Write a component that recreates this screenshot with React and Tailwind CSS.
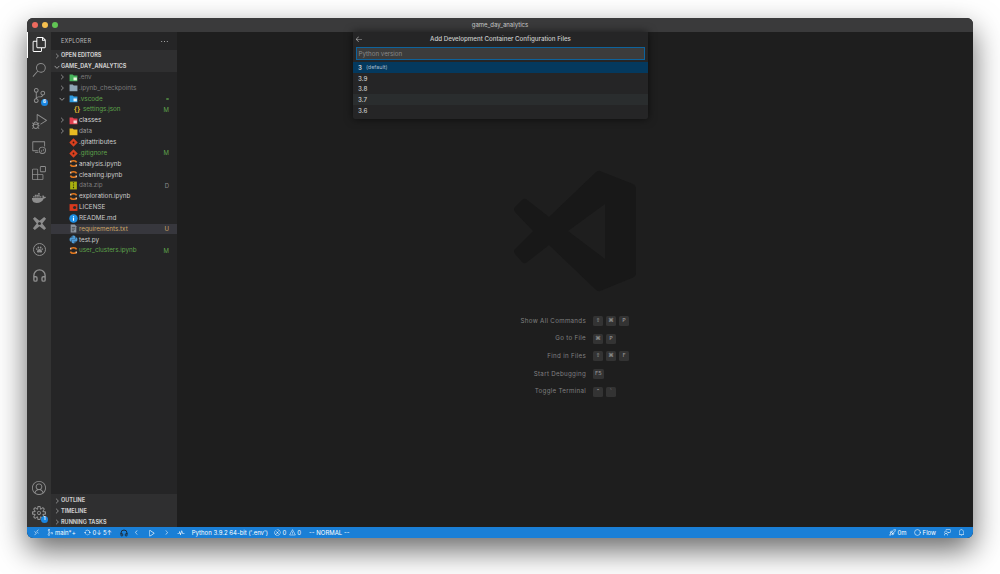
import React from "react";
import { VscFiles, VscSearch, VscSourceControl, VscDebugAlt, VscRemoteExplorer, VscExtensions, VscAccount, VscSettingsGear, VscBell, VscFeedback, VscRemote, VscSync, VscError, VscWarning, VscChevronRight, VscChevronDown, VscChevronLeft, VscArrowLeft, VscEllipsis, VscPlay, VscGitMerge, VscPulse } from "react-icons/vsc";
import { FaDocker, FaPaw, FaPython } from "react-icons/fa";
import { Headphones, Rocket, Circle } from "lucide-react";

const Folder = ({ c, badge }) => (
  <svg width="9" height="9" viewBox="0 0 16 16" className="shrink-0">
    <path d="M1 2.5h5.5l2 2H15v10H1z" fill={c} />
    {badge && <rect x="8" y="8" width="6" height="5" fill={badge} />}
  </svg>
);
const Git = () => (
  <svg width="9" height="9" viewBox="0 0 16 16" className="shrink-0"><path d="M8 0.5l7.5 7.5-7.5 7.5L0.5 8z" fill="#d8401f" /><circle cx="8" cy="8" r="1.6" fill="#3a1a10" /></svg>
);
const Jup = () => (
  <svg width="9" height="9" viewBox="0 0 16 16" className="shrink-0" fill="none" stroke="#e87a1d" strokeWidth="2.8">
    <path d="M2.5 6C4 2 12 2 13.5 6" /><path d="M2.5 10C4 14 12 14 13.5 10" /><path d="M3 3v3M13 10v3" stroke="#ddd" strokeWidth="1.6" />
  </svg>
);
const Braces = () => <span className="w-[9px] shrink-0 text-center text-[7px] font-bold text-[#e0b32d] leading-none">{"{}"}</span>;
const Zip = () => (
  <svg width="9" height="9" viewBox="0 0 16 16" className="shrink-0"><rect x="2" y="1" width="12" height="14" fill="#a8b10f" /><path d="M7 2h2v2H7zM7 6h2v2H7zM7 10h2v3H7z" fill="#2b2b10" /></svg>
);
const Lic = () => (
  <svg width="9" height="9" viewBox="0 0 16 16" className="shrink-0"><rect x="1" y="2" width="14" height="12" fill="#d9391e" /><circle cx="10" cy="8" r="2.8" fill="#2a2a2a" /></svg>
);
const Info = () => (
  <svg width="9" height="9" viewBox="0 0 16 16" className="shrink-0"><circle cx="8" cy="8" r="7.5" fill="#1e90e6" /><rect x="7" y="7" width="2" height="5" fill="#fff" /><rect x="7" y="4" width="2" height="2" fill="#fff" /></svg>
);
const Txt = () => (
  <svg width="9" height="9" viewBox="0 0 16 16" className="shrink-0"><path d="M3 1h7l3 3v11H3z" fill="#8d96a0" /><path d="M5 6h6M5 9h6M5 12h4" stroke="#333" strokeWidth="1.2" /></svg>
);
const Py = () => <FaPython size={9} color="#4d9bd6" className="shrink-0" />;

const G = "text-[#5fa44c]";
const files = [
  { n: ".env", i: <Folder c="#47b35c" badge="#e8f5e0" />, ch: "r", t: "text-[#7d7d7d]" },
  { n: ".ipynb_checkpoints", i: <Folder c="#8fa6b5" />, ch: "r", t: "text-[#7d7d7d]" },
  { n: ".vscode", i: <Folder c="#2f9be0" badge="#e5f3fb" />, ch: "d", t: G, dot: true },
  { n: "settings.json", i: <Braces />, t: G, s: "M", extra: true },
  { n: "classes", i: <Folder c="#e2404f" badge="#f5d5d8" />, ch: "r", t: "text-[#d8d8d8]" },
  { n: "data", i: <Folder c="#e8bb22" />, ch: "r", t: "text-[#9a9a9a]" },
  { n: ".gitattributes", i: <Git />, t: "text-[#cccccc]" },
  { n: ".gitignore", i: <Git />, t: G, s: "M" },
  { n: "analysis.ipynb", i: <Jup />, t: "text-[#cccccc]" },
  { n: "cleaning.ipynb", i: <Jup />, t: "text-[#cccccc]" },
  { n: "data.zip", i: <Zip />, t: "text-[#7a7a7a]", s: "D", sc: "text-[#8a8a8a]" },
  { n: "exploration.ipynb", i: <Jup />, t: "text-[#cccccc]" },
  { n: "LICENSE", i: <Lic />, t: "text-[#cccccc]" },
  { n: "README.md", i: <Info />, t: "text-[#cccccc]" },
  { n: "requirements.txt", i: <Txt />, t: "text-[#d0a868]", s: "U", sc: "text-[#d0a868]", sel: true },
  { n: "test.py", i: <Py />, t: "text-[#cccccc]" },
  { n: "user_clusters.ipynb", i: <Jup />, t: G, s: "M" },
];

const Row = ({ f }) => (
  <div className={`flex h-[10.85px] items-center text-[6.3px] leading-none ${f.sel ? "bg-[#37373d]" : ""}`}>
    <span className={`flex w-[17px] shrink-0 justify-end pr-[2px] ${f.extra ? "mr-[4px]" : ""}`}>
      {f.ch === "r" && <VscChevronRight size={8} color="#c5c5c5" />}
      {f.ch === "d" && <VscChevronDown size={8} color="#c5c5c5" />}
    </span>
    <span className="flex w-[10px] shrink-0 items-center justify-center">{f.i}</span>
    <span className={`ml-[1px] ${f.t}`}>{f.n}</span>
    {f.s && <span className={`ml-auto mr-[8px] text-[6px] ${f.sc || G}`}>{f.s}</span>}
    {f.dot && <span className="ml-auto mr-[8.5px] h-[2.5px] w-[2.5px] rounded-full bg-[#4a7a3e]" />}
  </div>
);

const Section = ({ label, open, low }) => (
  <div className={`flex h-[10.85px] items-center bg-[#2f2f30] text-[5.5px] font-bold leading-none text-[#cccccc] ${low ? "pt-[1.5px]" : "pt-[0.5px]"}`}>
    <span className="flex w-[10px] shrink-0 justify-end pr-[0.5px]">
      {open ? <VscChevronDown size={8} color="#c5c5c5" /> : <VscChevronRight size={8} color="#c5c5c5" />}
    </span>
    <span>{label}</span>
  </div>
);

const XIcon = () => (
  <svg width="15" height="15" viewBox="0 0 16 16" fill="#8c8c8c">
    <path d="M1 3l2-2 5 4 5-4 2 2-4 5 4 5-2 2-5-4-5 4-2-2 4-5z" />
    <circle cx="8" cy="8" r="1.6" fill="#333" />
  </svg>
);
const Act = ({ children, active, badge }) => (
  <div className={`relative flex h-[25.6px] w-full items-center justify-center ${active ? "text-white" : "text-[#8e8e8e]"}`}>
    {active && <span className="absolute inset-y-0 left-0 w-[1px] bg-white" />}
    {children}
    {badge && <span className="absolute bottom-[3px] right-[3px] flex h-[7px] w-[7px] items-center justify-center rounded-full bg-[#1a85e0] text-[4.5px] font-bold leading-none text-white">{badge}</span>}
  </div>
);

const Key = ({ children }) => (
  <span className="flex h-[10px] min-w-[10px] items-center justify-center rounded-[1.5px] bg-[#333333] px-[2px] text-[5.5px] font-medium leading-none text-[#a0a0a0]" style={{ fontFamily: "'DejaVu Sans', sans-serif" }}>{children}</span>
);
const Hint = ({ label, keys }) => (
  <div className="flex h-[17.7px] items-center">
    <span className="w-[120px] pr-[7px] text-right text-[6.2px] leading-none tracking-[0.3px] text-[#808080]">{label}</span>
    <span className="flex gap-[3px]">{keys.map((k, i) => <Key key={i}>{k}</Key>)}</span>
  </div>
);

const Opt = ({ children, cls = "" }) => (
  <div className={`flex h-[10.8px] items-center px-[5px] pt-[1px] text-[6.2px] font-medium leading-none text-[#cccccc] ${cls}`}>{children}</div>
);

export default function App() {
  return (
    <div className="h-[574px] w-[1000px] overflow-hidden bg-white pl-[27px] pt-[18px]" style={{ fontFamily: "Inter, 'Liberation Sans', sans-serif" }}>
      <div className="flex h-[520px] w-[946px] flex-col overflow-hidden rounded-[6px] bg-[#1e1e1e] shadow-[0_12px_30px_rgba(0,0,0,0.6)]">
        <div className="relative flex h-[14px] shrink-0 items-center justify-center bg-[#3a3a3b]">
          <div className="absolute left-[5px] top-[4px] flex gap-[4px]">
            <span className="h-[6px] w-[6px] rounded-full bg-[#ed6a5e]" />
            <span className="h-[6px] w-[6px] rounded-full bg-[#f4bf4f]" />
            <span className="h-[6px] w-[6px] rounded-full bg-[#61c554]" />
          </div>
          <span className="text-[6px] leading-none text-[#cccccc]">game_day_analytics</span>
        </div>

        <div className="flex min-h-0 flex-1">
          <div className="flex w-[24px] shrink-0 flex-col items-center bg-[#333333]">
            <Act active><VscFiles size={15} /></Act>
            <Act><VscSearch size={14} /></Act>
            <Act badge="6"><VscSourceControl size={15} /></Act>
            <Act><VscDebugAlt size={15} /></Act>
            <Act><VscRemoteExplorer size={14} /></Act>
            <Act><VscExtensions size={14} /></Act>
            <Act><FaDocker size={14} /></Act>
            <Act><XIcon /></Act>
            <Act>
              <span className="flex h-[13px] w-[13px] items-center justify-center rounded-full border border-[#8e8e8e]"><FaPaw size={7} /></span>
            </Act>
            <Act><Headphones size={15} strokeWidth={2.2} /></Act>
            <div className="mt-auto mb-[1px] w-full">
              <Act><VscAccount size={14} /></Act>
              <Act badge="1"><VscSettingsGear size={14} /></Act>
            </div>
          </div>

          <div className="flex w-[126px] shrink-0 flex-col bg-[#252526]">
            <div className="flex h-[18px] shrink-0 items-center justify-between pl-[10px] pr-[8px] pt-[1.5px] text-[#bbbbbb]">
              <span className="text-[5.6px] leading-none tracking-[0.2px]">EXPLORER</span>
              <VscEllipsis size={9} />
            </div>
            <Section label="OPEN EDITORS" />
            <Section label="GAME_DAY_ANALYTICS" open />
            {files.map((f) => <Row key={f.n} f={f} />)}
            <div className="mt-auto">
              <Section label="OUTLINE" low />
              <Section label="TIMELINE" low />
              <Section label="RUNNING TASKS" low />
            </div>
          </div>

          <div className="relative flex flex-1 flex-col items-center bg-[#1e1e1e]">
            <svg width="124" height="124" viewBox="0 0 124 124" className="mt-[137px] shrink-0">
              <path
                fillRule="evenodd"
                fill="#181818"
                d="M87 2 L120 15 Q123 16.5 123 20 L123 104 Q123 107 120 108.5 L87 122 Q85 123 82 120 L36 76 L13 94 Q11 95 9 93 L2 85 Q0 82 2 80 L20 62 L2 43 Q0 40 2 38 L9 31 Q11 29 13 30 L36 48 L82 4 Q85 1 87 2 Z M92 35 L55 62 L92 90 Z"
              />
            </svg>
            <div className="mt-[19px] flex w-[204px] flex-col">
              <Hint label="Show All Commands" keys={["⇧", "⌘", "P"]} />
              <Hint label="Go to File" keys={["⌘", "P"]} />
              <Hint label="Find in Files" keys={["⇧", "⌘", "F"]} />
              <Hint label="Start Debugging" keys={["F5"]} />
              <Hint label="Toggle Terminal" keys={["⌃", "`"]} />
            </div>

            <div className="absolute left-[176px] top-0 w-[295px] rounded-b-[2px] bg-[#252526] pb-[3.5px] shadow-[0_0_8px_rgba(0,0,0,0.6)]">
              <div className="relative flex h-[13px] items-center justify-center">
                <VscArrowLeft size={8} color="#b0b0b0" className="absolute left-[2px]" />
                <span className="pt-[1.5px] text-[6.2px] font-medium leading-none text-[#cccccc]">Add Development Container Configuration Files</span>
              </div>
              <div className="mx-[3px] mt-[2px] flex h-[13px] items-center border border-[#0e639c] bg-[#3c3c3c] px-[1.5px] pt-[1px]">
                <span className="text-[6.2px] leading-none text-[#8a8a8a]">Python version</span>
              </div>
              <div className="mt-[2px]">
                <Opt cls="bg-[#04395e]"><span className="font-semibold">3</span><span className="ml-[4px] text-[5.4px] font-normal text-[#a8bccb]">(default)</span></Opt>
                <Opt>3.9</Opt>
                <Opt>3.8</Opt>
                <Opt cls="bg-[#2a2d2e]">3.7</Opt>
                <Opt>3.6</Opt>
              </div>
            </div>
          </div>
        </div>

        <div className="flex h-[11px] shrink-0 items-center bg-[#1a7fd6] text-[6px] leading-none text-white">
          <VscRemote size={7} className="ml-[6px]" />
          <VscGitMerge size={7} className="ml-[7px]" />
          <span className="ml-[1px]">main*+</span>
          <VscSync size={7} className="ml-[8px]" />
          <span className="ml-[2px]">0↓ 5↑</span>
          <Headphones size={8} strokeWidth={3} color="#1b2b3a" className="ml-[8px]" />
          <VscChevronLeft size={7} className="ml-[5px]" />
          <VscPlay size={8} className="ml-[8px]" />
          <VscChevronRight size={7} className="ml-[7px]" />
          <VscPulse size={8} className="ml-[7px]" />
          <span className="ml-[7px]">Python 3.9.2 64-bit ('.env')</span>
          <VscError size={7} className="ml-[6px]" />
          <span className="ml-[1.5px]">0</span>
          <VscWarning size={7} className="ml-[2.5px]" />
          <span className="ml-[1.5px]">0</span>
          <span className="ml-[8px]">-- NORMAL --</span>
          <Rocket size={7} className="ml-auto" />
          <span className="ml-[2px]">0m</span>
          <Circle size={7} className="ml-[7px]" />
          <span className="ml-[2px]">Flow</span>
          <VscFeedback size={7} className="ml-[8px]" />
          <VscBell size={7} className="ml-[7px] mr-[8px]" />
        </div>
      </div>
    </div>
  );
}
